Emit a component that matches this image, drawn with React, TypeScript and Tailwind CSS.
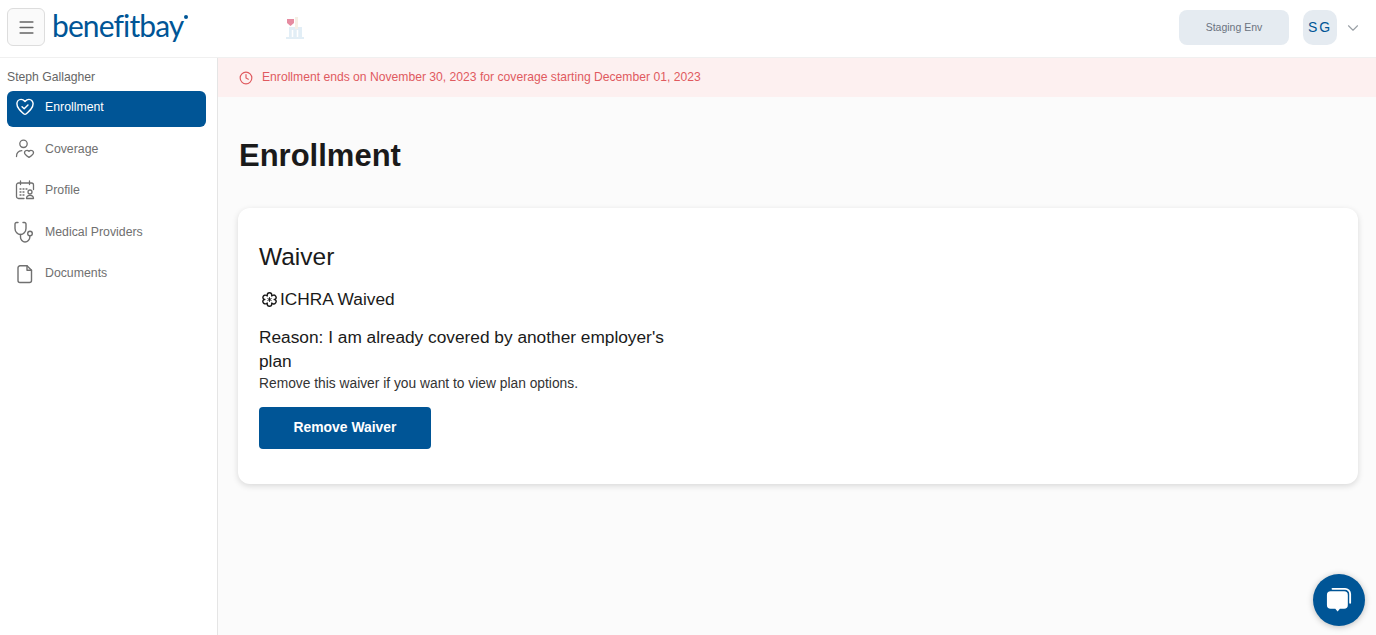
import { Menu, ChevronDown, Clock } from "lucide-react";

const navIcon = "w-[20px] h-[20px] shrink-0";

function HeartCheck() {
  return (
    <svg viewBox="0 0 20 20" className="w-[18px] h-[18px] shrink-0" fill="none" stroke="currentColor" strokeWidth="1.600" strokeLinecap="round" strokeLinejoin="round">
      <path d="M10 3.800C8.800 2.400 7.300 1.500 5.600 1.500 2.900 1.500 1 3.700 1 6.500c0 2.400 1 4.300 2.500 6 1.600 1.900 3.500 3.500 5 5 .9.800 2.100.800 3 0 1.500-1.500 3.400-3.100 5-5 1.500-1.700 2.500-3.600 2.500-6 0-2.800-1.900-5-4.600-5-1.700 0-3.200.9-4.400 2.300Z" />
      <path d="m6.700 9.700 2.400 2.300 4.200-4.200" />
    </svg>
  );
}
function PersonHeart() {
  return (
    <svg viewBox="0 0 20 20" className={navIcon} fill="none" stroke="currentColor" strokeWidth="1.300" strokeLinecap="round" strokeLinejoin="round">
      <circle cx="8.500" cy="4.800" r="3.700" />
      <path d="M1.500 17.500c0-3.200 2.300-5.500 5.300-5.800" />
      <path d="M14 12.400c-.9-1-2.400-1.300-3.400-.6-1.100.8-1.300 2.200-.5 3.400.8 1.100 2.200 2.200 3.900 3.200 1.700-1 3.100-2.100 3.900-3.200.8-1.200.6-2.600-.5-3.400-1-.7-2.500-.4-3.400.6Z" />
    </svg>
  );
}
function CalendarPerson() {
  return (
    <svg viewBox="0 0 20 20" className={navIcon} fill="none" stroke="currentColor" strokeWidth="1.300" strokeLinecap="round" strokeLinejoin="round">
      <path d="M9 18.500H3.500a2 2 0 0 1-2-2V5a2 2 0 0 1 2-2h13a2 2 0 0 1 2 2v4.500" />
      <path d="M5.500 1v3.500M14.500 1v3.500" />
      <path d="M5 9h1M8 9h1M11 9h1M5 12h1M8 12h1M5 15h1M8 15h1" />
      <circle cx="15" cy="12" r="2" />
      <path d="M11.500 18.500c0-2 1.500-3.200 3.500-3.200s3.500 1.200 3.500 3.200Z" />
    </svg>
  );
}
function Stethoscope() {
  return (
    <svg viewBox="0 0 22 22" className="w-[22px] h-[22px] shrink-0" fill="none" stroke="currentColor" strokeWidth="1.400" strokeLinecap="round" strokeLinejoin="round">
      <path d="M4 1.500H2.500A1.500 1.500 0 0 0 1 3v4.500c0 3.300 2.700 6 5.500 6s5.500-2.700 5.500-6V3a1.500 1.500 0 0 0-1.500-1.500H9" />
      <path d="M6.500 13.500v2.700c0 2.700 2.200 4.800 4.500 4.800 2.600 0 4.800-2.100 4.800-4.800v-1.500" />
      <circle cx="16" cy="12.500" r="2.300" />
    </svg>
  );
}
function DocIcon() {
  return (
    <svg viewBox="0 0 20 20" className={navIcon} fill="none" stroke="currentColor" strokeWidth="1.400" strokeLinecap="round" strokeLinejoin="round">
      <path d="M5 1.800h7L16.500 6.300V16.500a2 2 0 0 1-2 2H5a2 2 0 0 1-2-2V3.800a2 2 0 0 1 2-2Z" />
      <path d="M12 1.800V6.300h4.500" />
    </svg>
  );
}
function Medical() {
  return (
    <svg viewBox="0 0 16 16" className="w-[15px] h-[15px] shrink-0" fill="none" stroke="#1a1a1a" strokeWidth="1.500" strokeLinejoin="round">
      <path d="M5.600 3.200a2.400 2.400 0 0 1 4.800 0l0 1 1-.5a2.400 2.400 0 0 1 2.400 4.200L13 8l.8.100a2.400 2.400 0 0 1-2.400 4.200l-1-.5 0 1a2.400 2.400 0 0 1-4.800 0l0-1-1 .5a2.400 2.400 0 0 1-2.400-4.200L3 8l-.8-.1a2.400 2.400 0 0 1 2.400-4.200l1 .5Z" />
      <path d="M8 5.500v5M5.800 6.800l4.400 2.400M10.200 6.800 5.800 9.200" strokeWidth="1" />
    </svg>
  );
}
function Chat() {
  return (
    <svg viewBox="0 0 28 28" className="w-[26px] h-[26px]">
      <path d="M7 2h13.500A5.500 5.500 0 0 1 26 7.500V17" fill="none" stroke="#ffffff" strokeWidth="2" strokeLinecap="round" />
      <path d="M5 4.500h14.500a4 4 0 0 1 4 4v11a4 4 0 0 1-4 4H15l-2.500 3-2.500-3H5a4 4 0 0 1-4-4v-11a4 4 0 0 1 4-4Z" fill="#ffffff" />
    </svg>
  );
}
function Illustration() {
  return (
    <svg viewBox="0 0 20 24" className="w-[20px] h-[24px] opacity-80">
      <rect x="4" y="11" width="13" height="10" fill="#dcebf5" />
      <rect x="10" y="1" width="3" height="12" fill="#f5ecdf" />
      <path d="M2 3h7v4l-3.500 3L2 7Z" fill="#e0708a" />
      <path d="M1 22h18" stroke="#cfe4f2" strokeWidth="1.500" />
      <path d="M7.500 14v7M12.500 14v7" stroke="#ffffff" strokeWidth="1.500" />
    </svg>
  );
}

const items = [
  { label: "Coverage", icon: <PersonHeart /> },
  { label: "Profile", icon: <CalendarPerson /> },
  { label: "Medical Providers", icon: <Stethoscope /> },
  { label: "Documents", icon: <DocIcon /> },
];

export default function App() {
  return (
    <div className="h-[635px] w-[1376px] overflow-hidden flex flex-col bg-white font-['Liberation_Sans',Arial,sans-serif] text-[#1a1a1a] relative">
      <header className="h-[58px] shrink-0 flex items-center border-b border-[#f0f0f0] bg-white pl-[7px] pr-[14px] pb-[2px]">
        <button className="w-[38px] h-[38px] -mt-[1px] rounded-[6px] border border-[#dddddd] bg-[#fafafa] flex items-center justify-center text-[#666666]">
          <Menu size={19} strokeWidth={2} />
        </button>
        <div className="ml-[7px] -mt-[6px] w-[233px] flex items-start font-['Lato',sans-serif] font-normal text-[30px] leading-[36px] text-[#005596] tracking-[-0.900px]">
          benefitbay
          <span className="w-[4px] h-[4px] rounded-full bg-[#005596] mt-[8px] ml-[1px]" />
        </div>
        <Illustration />
        <div className="ml-auto w-[110px] h-[35px] rounded-[8px] bg-[#e5ebf1] flex items-center justify-center text-[10.500px] text-[#6b7280]">
          Staging Env
        </div>
        <div className="ml-[14px] w-[34px] h-[35px] rounded-[10px] bg-[#e5ebf1] flex items-center justify-center text-[14px] tracking-[2px] text-[#005596]">
          SG
        </div>
        <ChevronDown size={18} strokeWidth={1.500} className="ml-[7px] text-[#9aa0a6]" />
      </header>
      <div className="flex flex-1 min-h-0">
        <aside className="w-[218px] shrink-0 border-r border-[#e5e5e5] bg-white pt-[12px] px-[7px]">
          <div className="text-[12.200px] leading-[15px] text-[#666666] mb-[6px]">Steph Gallagher</div>
          <div className="w-[199px] h-[36px] rounded-[6px] bg-[#005596] text-white flex items-center pl-[9px] gap-[11px] text-[12.300px] pb-[4px]">
            <HeartCheck />
            <span>Enrollment</span>
          </div>
          <div className="flex flex-col mt-[1px]">
            {items.map((it) => (
              <div key={it.label} className="h-[41.600px] pl-[8px] flex items-center gap-[10px] text-[12.300px] text-[#707070]">
                <span className="w-[20px] flex justify-center">{it.icon}</span>
                <span>{it.label}</span>
              </div>
            ))}
          </div>
        </aside>
        <main className="flex-1 bg-[#fbfbfb] min-w-0">
          <div className="h-[39px] bg-[#fdf0f0] flex items-center pl-[21px] gap-[9px] text-[12.150px] text-[#e05a5f]">
            <Clock size={14} strokeWidth={2} />
            <span>Enrollment ends on November 30, 2023 for coverage starting December 01, 2023</span>
          </div>
          <div className="px-[20px]">
            <h1 className="mt-[40px] text-[31px] leading-[38px] font-bold text-[#1a1a1a] ml-[1px]">Enrollment</h1>
            <section className="mt-[33px] w-[1120px] h-[276px] rounded-[12px] bg-white shadow-[0_2px_6px_rgba(0,0,0,0.14)] pl-[21px] pt-[34px]">
              <h2 className="text-[24.500px] leading-[30px] text-[#1a1a1a]">Waiver</h2>
              <div className="mt-[15px] flex items-center gap-[3px] text-[17.300px] leading-[24px] pl-[3px]">
                <Medical />
                <span>ICHRA Waived</span>
              </div>
              <p className="mt-[14px] w-[420px] text-[17.300px] leading-[24px]">
                Reason: I am already covered by another employer's plan
              </p>
              <p className="text-[13.800px] leading-[18px] text-[#333333] mt-[2px]">Remove this waiver if you want to view plan options.</p>
              <button className="mt-[14px] w-[172px] h-[42px] rounded-[4px] bg-[#005596] text-white font-bold text-[13.900px] flex items-center justify-center pb-[2px]">
                Remove Waiver
              </button>
            </section>
          </div>
        </main>
      </div>
      <div className="absolute right-[11px] bottom-[9px] w-[52px] h-[52px] rounded-full bg-[#005596] shadow-[0_1px_6px_rgba(0,0,0,0.25)] flex items-center justify-center">
        <Chat />
      </div>
    </div>
  );
}
